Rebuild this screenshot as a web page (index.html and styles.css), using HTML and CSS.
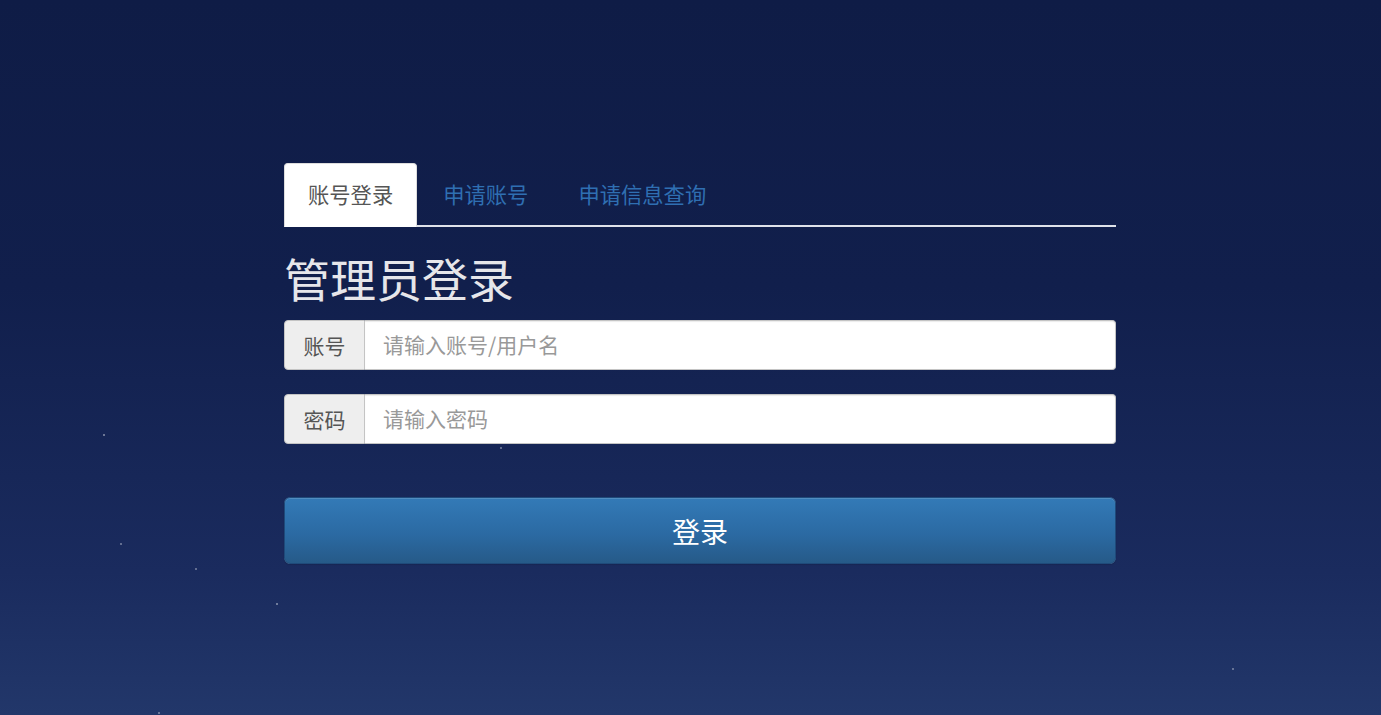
FILE: index.html
```html
<!DOCTYPE html>
<html lang="zh-CN">
<head>
    <meta charset="UTF-8">
    <meta name="viewport" content="width=device-width, initial-scale=1.0">
    <title>管理员登录</title>
    <link rel="stylesheet" href="styles.css">
</head>
<body>
    <div class="container">
        <ul class="nav-tabs">
            <li class="active"><a href="#">账号登录</a></li>
            <li><a href="#">申请账号</a></li>
            <li><a href="#">申请信息查询</a></li>
        </ul>

        <h2 class="title">管理员登录</h2>

        <div class="input-group">
            <span class="addon">账号</span>
            <input type="text" class="form-control" placeholder="请输入账号/用户名">
        </div>

        <div class="input-group">
            <span class="addon">密码</span>
            <input type="password" class="form-control" placeholder="请输入密码">
        </div>

        <button class="btn-login">登录</button>
    </div>
</body>
</html>
```

FILE: styles.css
```css
html, body {
    height: 100%;
}
body {
    margin: 0;
    padding-left: 19px;
    box-sizing: border-box;
    font-family: "Noto Sans CJK SC", "Liberation Sans", sans-serif;
    color: #333;
    background-color: #13204d;
    background-image:
        radial-gradient(circle at 104px 435px, rgba(255,255,255,0.7) 0, rgba(255,255,255,0) 1.5px),
        radial-gradient(circle at 121px 544px, rgba(255,255,255,0.6) 0, rgba(255,255,255,0) 1.5px),
        radial-gradient(circle at 196px 569px, rgba(255,255,255,0.6) 0, rgba(255,255,255,0) 1.5px),
        radial-gradient(circle at 277px 604px, rgba(255,255,255,0.7) 0, rgba(255,255,255,0) 1.5px),
        radial-gradient(circle at 501px 448px, rgba(255,255,255,0.6) 0, rgba(255,255,255,0) 1.5px),
        radial-gradient(circle at 159px 713px, rgba(255,255,255,0.6) 0, rgba(255,255,255,0) 1.5px),
        radial-gradient(circle at 1233px 669px, rgba(255,255,255,0.6) 0, rgba(255,255,255,0) 1.5px),
        linear-gradient(to bottom, #0f1c46 0%, #111f4c 40%, #1a2b5e 80%, #22376a 100%);
    background-repeat: no-repeat;
}
.container {
    width: 832px;
    margin: 0 auto;
    padding-top: 163px;
}

/* tabs */
.nav-tabs {
    list-style: none;
    margin: 0;
    padding: 0;
    display: flex;
    border-bottom: 2px solid #dfe2ea;
}
.nav-tabs li {
    margin-right: 2px;
    margin-bottom: -2px;
}
.nav-tabs a {
    display: block;
    padding: 15px 23px 17px;
    font-size: 21.3px;
    line-height: 30px;
    color: #2f6fb2;
    text-decoration: none;
    border: 1px solid transparent;
    border-radius: 4px 4px 0 0;
}
.nav-tabs .active a {
    color: #555;
    background: #fff;
    border-color: #ddd;
    border-bottom-color: #fff;
}

.title {
    margin: 21px 0 14px;
    font-size: 46px;
    line-height: 58px;
    font-weight: normal;
    color: #e6e6ea;
}

/* inputs */
.input-group {
    display: flex;
    height: 50px;
    margin-bottom: 24px;
}
.addon {
    width: 79px;
    flex-shrink: 0;
    display: flex;
    align-items: center;
    justify-content: center;
    font-size: 21px;
    color: #555;
    background: #eee;
    border: 1px solid #c4c4c4;
    border-radius: 4px 0 0 4px;
}
.form-control {
    flex: 1;
    min-width: 0;
    box-sizing: border-box;
    height: 50px;
    padding: 0 18px 2px;
    font-family: inherit;
    font-size: 21px;
    color: #555;
    background: #fff;
    border: 1px solid #c4c4c4;
    border-left: none;
    border-radius: 0 4px 4px 0;
    box-shadow: inset 0 1px 1px rgba(0,0,0,0.08);
    outline: none;
}
.form-control::placeholder {
    color: #999;
}

.btn-login {
    display: block;
    width: 100%;
    height: 67px;
    margin-top: 53px;
    font-family: inherit;
    font-size: 28px;
    color: #fff;
    background-image: linear-gradient(to bottom, #337ab7 0%, #2b6aa3 55%, #265a88 100%);
    border: 1px solid #1f4a7a;
    border-radius: 6px;
    box-shadow: inset 0 1px 0 rgba(255,255,255,0.15), 0 1px 1px rgba(0,0,0,0.1);
    cursor: pointer;
}
```
